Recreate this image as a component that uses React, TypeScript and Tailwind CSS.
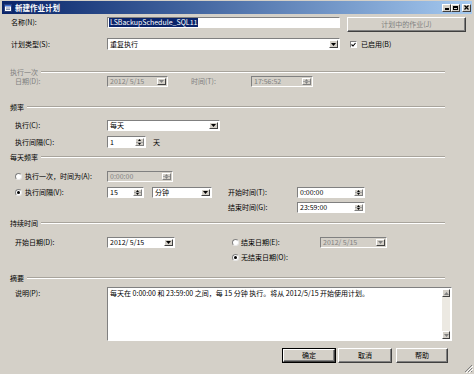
import React from "react";

const sunken = "border border-t-[#808080] border-l-[#808080] border-r-white border-b-white";
const raised = "border border-t-white border-l-white border-r-[#404040] border-b-[#404040]";

const Arrow = ({dir, gray}: {dir: "up" | "down"; gray?: boolean}) => (
    <svg width="5" height="3" viewBox="0 0 5 3">
        <path d={dir === "down" ? "M0 0h5L2.5 3z" : "M0 3h5L2.5 0z"} fill={gray ? "#808080" : "#000"}/>
    </svg>
);

const Combo = ({w, value, disabled}: {w: string; value: string; disabled?: boolean}) => (
    <div className={`${w} h-full flex p-px ${sunken} ${disabled ? "bg-[#d4d0c8] text-[#808080]" : "bg-white"}`}>
        <div className="flex-1 pl-px flex items-center whitespace-nowrap leading-[9px]">{value}</div>
        <div className={`w-[9px] flex items-center justify-center bg-[#d4d0c8] ${raised}`}>
            <Arrow dir="down" gray={disabled}/>
        </div>
    </div>
);

const Spin = ({w, value, disabled}: {w: string; value: string; disabled?: boolean}) => (
    <div className={`${w} h-full flex p-px ${sunken} ${disabled ? "bg-[#d4d0c8] text-[#808080]" : "bg-white"}`}>
        <div className="flex-1 pl-px flex items-center whitespace-nowrap leading-[9px]">{value}</div>
        <div className="w-[9px] flex flex-col bg-[#d4d0c8] border border-t-white border-l-white border-r-[#808080] border-b-[#808080]">
            <div className="flex-1 flex items-center justify-center border-b border-b-[#a0a0a0]">
                <svg width="3" height="2" viewBox="0 0 3 2"><path d="M0 2h3L1.5 0z" fill={disabled ? "#808080" : "#000"}/></svg>
            </div>
            <div className="flex-1 flex items-center justify-center">
                <svg width="3" height="2" viewBox="0 0 3 2"><path d="M0 0h3L1.5 2z" fill={disabled ? "#808080" : "#000"}/></svg>
            </div>
        </div>
    </div>
);

const Radio = ({checked}: {checked?: boolean}) => (
    <div className="w-[7px] h-[7px] shrink-0 rounded-full bg-white border border-t-[#808080] border-l-[#808080] border-r-[#e8e8e8] border-b-[#e8e8e8] flex items-center justify-center">
        {checked && <div className="w-[3px] h-[3px] rounded-full bg-black"/>}
    </div>
);

const Section = ({title, className, gray}: {title: string; className: string; gray?: boolean}) => (
    <div className={`${className} h-[8px] pl-[10px] pr-[29px] flex items-center gap-[3px] ${gray ? "text-[#808080]" : ""}`}>
        <span className="whitespace-nowrap leading-[9px]">{title}</span>
        <div className="flex-1 h-[2px] border-t border-t-[#a8a49c] border-b border-b-white"/>
    </div>
);

const Button = ({label, w, isDefault, disabled}: {label: string; w: string; isDefault?: boolean; disabled?: boolean}) => (
    <div className={`${w} h-full ${isDefault ? "border border-black" : ""}`}>
        <div className={`w-full h-full flex items-center justify-center leading-[9px] bg-[#d4d0c8] ${raised} shadow-[inset_-1px_-1px_0_#808080] ${disabled ? "text-[#808080]" : ""}`}>
            {label}
        </div>
    </div>
);

export default function App() {
    return (
        <div className="w-[474px] h-[374px] bg-[#d4d0c8] relative overflow-hidden text-[7px] leading-[9px] text-black font-['Noto_Sans_CJK_SC','Liberation_Sans',sans-serif]">
            {/* title bar */}
            <div className="mx-[2px] mt-[1px] h-[13px] flex items-center bg-linear-to-r from-[#0a246a] to-[#a6caf0]">
                <svg width="8" height="8" viewBox="0 0 8 8" className="ml-[2px]">
                    <rect x="0.5" y="0.5" width="7" height="7" fill="#fff" stroke="#2a3f7a"/>
                    <rect x="1" y="1" width="6" height="1.5" fill="#3a6ad0"/>
                    <path d="M2 4h4M2 5.5h4" stroke="#6a7aa0" strokeWidth="0.8"/>
                </svg>
                <span className="ml-[3px] text-white font-bold text-[7.5px]">新建作业计划</span>
                <div className="ml-auto mr-[1px] flex gap-0">
                    <div className={`w-[9px] h-[8px] bg-[#d4d0c8] ${raised} flex items-end justify-center pb-px`}>
                        <div className="w-[4px] h-[1.5px] bg-black"/>
                    </div>
                    <div className={`w-[9px] h-[8px] bg-[#d4d0c8] ${raised} flex items-center justify-center`}>
                        <div className="w-[5px] h-[4px] border border-black border-t-2"/>
                    </div>
                    <div className={`ml-[2px] w-[9px] h-[8px] bg-[#d4d0c8] ${raised} flex items-center justify-center`}>
                        <svg width="5" height="5" viewBox="0 0 5 5"><path d="M0.5 0.5l4 4M4.5 0.5l-4 4" stroke="#000" strokeWidth="1.2"/></svg>
                    </div>
                </div>
            </div>

            {/* 名称 */}
            <div className="mt-[3px] h-[15px] pl-[11px] flex items-start">
                <div className="w-[96px] h-[11px] flex items-center">名称(N):</div>
                <div className={`w-[233px] h-[11px] bg-white ${sunken} flex items-center pl-px`}>
                    <span className="bg-[#0a246a] text-white px-px">LSBackupSchedule_SQL11</span>
                </div>
                <div className="ml-[7px] h-full">
                    <Button label="计划中的作业(J)" w="w-[119px]" disabled/>
                </div>
            </div>

            {/* 计划类型 */}
            <div className="mt-[6px] h-[12px] pl-[11px] flex items-center">
                <div className="w-[96px]">计划类型(S):</div>
                <Combo w="w-[233px]" value="重复执行"/>
                <div className={`ml-[10px] w-[7px] h-[7px] bg-white ${sunken} flex items-center justify-center`}>
                    <svg width="5" height="5" viewBox="0 0 5 5"><path d="M0.5 2.5l1.5 1.5l2.5-3" fill="none" stroke="#000" strokeWidth="1.1"/></svg>
                </div>
                <span className="ml-[4px]">已启用(B)</span>
            </div>

            <Section title="执行一次" className="mt-[18px]" gray/>
            <div className="h-[11px] pl-[15px] flex items-center text-[#808080]">
                <div className="w-[92px]">日期(D):</div>
                <Combo w="w-[61px]" value="2012/ 5/15" disabled/>
                <div className="ml-[23px] w-[60px]">时间(T):</div>
                <Spin w="w-[62px]" value="17:56:52" disabled/>
            </div>

            <Section title="频率" className="mt-[16px]"/>
            <div className="mt-[9px] h-[11px] pl-[15px] flex items-center">
                <div className="w-[92px]">执行(C):</div>
                <Combo w="w-[113px]" value="每天"/>
            </div>
            <div className="mt-[5px] h-[12px] pl-[15px] flex items-center">
                <div className="w-[92px]">执行间隔(C):</div>
                <Spin w="w-[39px]" value="1"/>
                <span className="ml-[7px]">天</span>
            </div>

            <Section title="每天频率" className="mt-[5px]"/>
            <div className="mt-[10px] h-[11px] pl-[15px] flex items-center">
                <Radio/>
                <div className="ml-[3px] w-[82px]">执行一次，时间为(A):</div>
                <Spin w="w-[66px]" value="0:00:00" disabled/>
            </div>
            <div className="mt-[5px] h-[11px] pl-[15px] flex items-center">
                <Radio checked/>
                <div className="ml-[3px] w-[82px]">执行间隔(V):</div>
                <Spin w="w-[37px]" value="15"/>
                <div className="ml-[8px] h-full">
                    <Combo w="w-[60px]" value="分钟"/>
                </div>
                <div className="ml-[16px] w-[69px]">开始时间(T):</div>
                <Spin w="w-[68px]" value="0:00:00"/>
            </div>
            <div className="mt-[4px] h-[11px] pl-[228px] flex items-center">
                <div className="w-[69px]">结束时间(G):</div>
                <Spin w="w-[68px]" value="23:59:00"/>
            </div>

            <Section title="持续时间" className="mt-[6px]"/>
            <div className="mt-[10px] h-[11px] pl-[15px] flex items-center">
                <div className="w-[92px]">开始日期(D):</div>
                <Combo w="w-[68px]" value="2012/ 5/15"/>
                <div className="ml-[57px]"><Radio/></div>
                <div className="ml-[2px] w-[79px]">结束日期(E):</div>
                <Combo w="w-[67px]" value="2012/ 5/15" disabled/>
            </div>
            <div className="mt-[4px] h-[10px] pl-[232px] flex items-center">
                <Radio checked/>
                <div className="ml-[2px]">无结束日期(O):</div>
            </div>

            <Section title="摘要" className="mt-[12px]"/>
            <div className="mt-[5px] h-[54px] pl-[15px] flex items-start">
                <div className="w-[92px] pt-[2px]">说明(P):</div>
                <div className={`w-[345px] h-full flex bg-white ${sunken} p-px`}>
                    <div className="flex-1 pl-px whitespace-nowrap">
                        每天在 0:00:00 和 23:59:00 之间，每 15 分钟 执行。将从 2012/5/15 开始使用计划。
                    </div>
                    <div className="w-[8px] flex flex-col bg-[#ece9e2]">
                        <div className={`h-[8px] flex items-center justify-center bg-[#d4d0c8] ${raised}`}>
                            <Arrow dir="up" gray/>
                        </div>
                        <div className="flex-1"/>
                        <div className={`h-[8px] flex items-center justify-center bg-[#d4d0c8] ${raised}`}>
                            <Arrow dir="down" gray/>
                        </div>
                    </div>
                </div>
            </div>

            <div className="mt-[7px] h-[15px] pl-[282px] flex">
                <Button label="确定" w="w-[54px]" isDefault/>
                <div className="ml-[2px] h-full"><Button label="取消" w="w-[54px]"/></div>
                <div className="ml-[4px] h-full"><Button label="帮助" w="w-[52px]"/></div>
            </div>

            {/* resize grip */}
            <svg width="10" height="10" viewBox="0 0 10 10" className="absolute right-[1px] bottom-[1px]">
                <path d="M9 2L2 9M9 5L5 9M9 8L8 9" stroke="#808080" strokeWidth="1"/>
                <path d="M10 3L3 10M10 6L6 10" stroke="#fff" strokeWidth="1"/>
            </svg>
        </div>
    );
}
